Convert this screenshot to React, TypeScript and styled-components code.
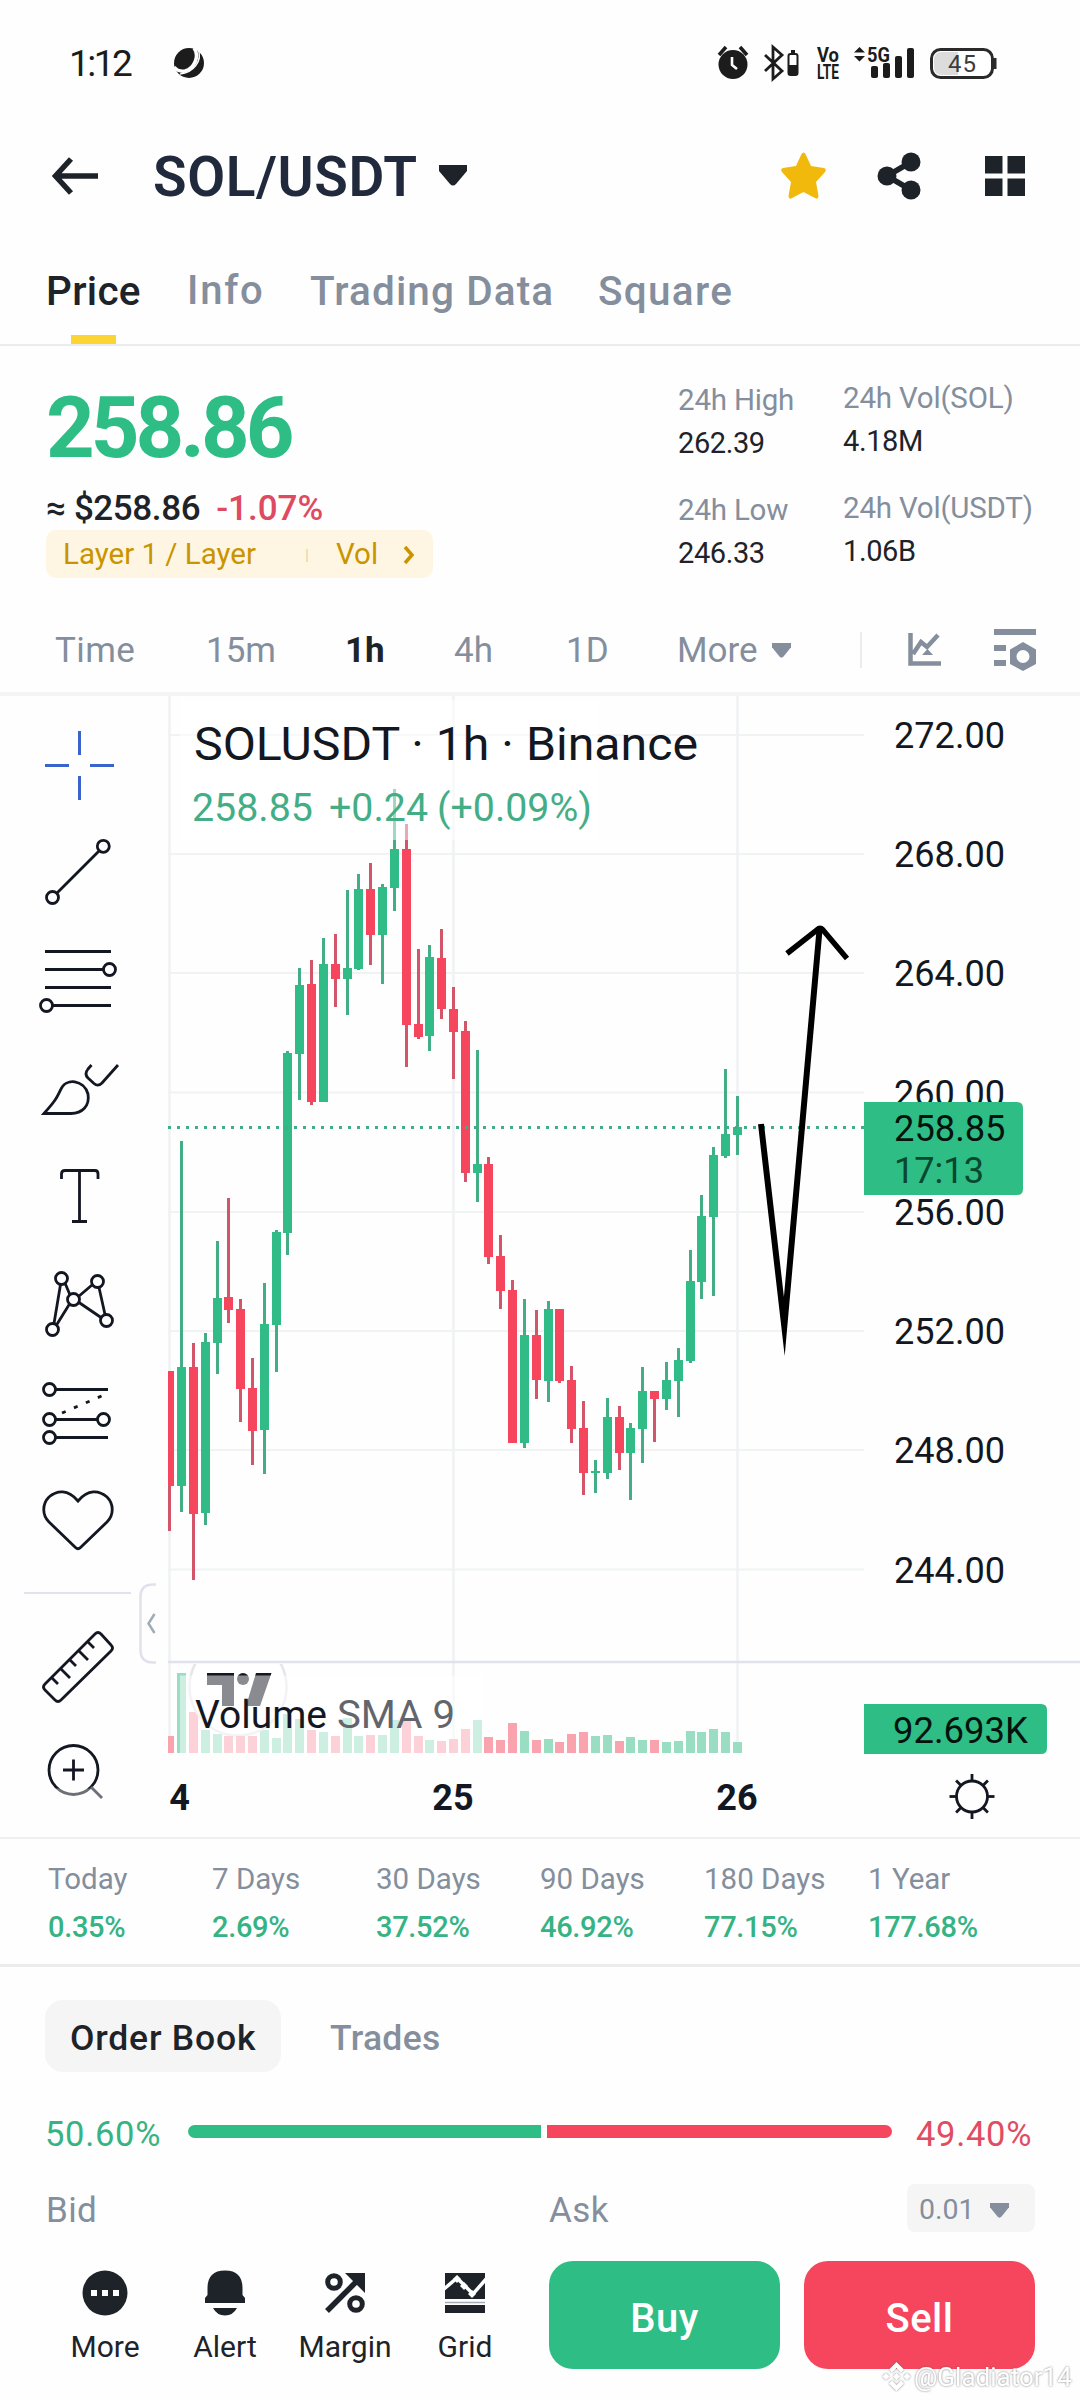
import React from 'react';
import styled, { createGlobalStyle } from 'styled-components';

const ink = '#1e2329';
const gray = '#848e9c';
const green = '#2ebd85';
const red = '#f6465d';

const Global = createGlobalStyle`
  body { margin: 0; background: #fff; }
  * { box-sizing: border-box; }
`;

const Screen = styled.main`
  position: relative;
  width: 1080px;
  height: 2400px;
  overflow: hidden;
  background: #fefefe;
  font-family: Roboto, 'Liberation Sans', sans-serif;
  color: ${ink};
  display: flex;
  flex-direction: column;
`;

interface TextProps {
  $size: number;
  $color?: string;
  $weight?: number;
  $spacing?: number;
  $line?: number;
}

const Text = styled.span<TextProps>`
  display: block;
  white-space: pre;
  font-size: ${p => p.$size}px;
  color: ${p => p.$color ?? ink};
  font-weight: ${p => p.$weight ?? 400};
  letter-spacing: ${p => p.$spacing ?? 0}px;
  line-height: ${p => (p.$line ? `${p.$line}px` : 1)};
`;

/* ---------- status bar ---------- */

const StatusBar = styled.header`
  height: 126px;
  flex: none;
  display: flex;
  align-items: center;
  justify-content: space-between;
  padding: 0 80px 0 69px;
`;

const StatusLeft = styled.div`
  display: flex;
  align-items: center;
  gap: 43px;
`;

/* ---------- header ---------- */

const Header = styled.div`
  height: 99px;
  flex: none;
  display: flex;
  align-items: center;
  padding: 0 55px 0 51px;
`;

const Pair = styled.div`
  display: flex;
  align-items: center;
  gap: 21px;
  margin-left: 54px;
  flex: 1;
`;

const PairName = styled.div`
  padding-top: 4px;
`;

const HeaderActions = styled.div`
  display: flex;
  align-items: center;
`;

/* ---------- tabs ---------- */

const Tabs = styled.nav`
  height: 121px;
  flex: none;
  display: flex;
  padding-left: 46px;
  border-bottom: 2px solid #eaecef;
`;

const Tab = styled.div<{ $width: number; $active?: boolean }>`
  position: relative;
  width: ${p => p.$width}px;
  padding-top: 46px;
  ${p =>
    p.$active &&
    `&::after {
      content: '';
      position: absolute;
      left: 25px;
      bottom: 0;
      width: 45px;
      height: 9px;
      background: #fcd535;
    }`}
`;

/* ---------- ticker ---------- */

const Ticker = styled.section`
  height: 261px;
  flex: none;
  display: flex;
  padding-left: 46px;
`;

const PriceBlock = styled.div`
  width: 632px;
  padding-top: 42px;
`;

const SubPrice = styled.div`
  display: flex;
  gap: 16px;
  margin-top: 21px;
`;

const Tag = styled.div`
  width: 387px;
  height: 48px;
  margin-top: 1px;
  border-radius: 10px;
  background: #fef6e2;
  display: flex;
  align-items: center;
  padding: 2px 0 0 17px;
`;

const TagDivider = styled.i`
  width: 2px;
  height: 13px;
  margin: 0 28px 0 50px;
  background: #f1dfae;
`;

const Stats = styled.div<{ $width: number; $top: number }>`
  width: ${p => p.$width}px;
  padding-top: ${p => p.$top}px;
  display: grid;
  grid-template-rows: 43px 67px 43px 40px;
`;

/* ---------- intervals ---------- */

const Intervals = styled.nav`
  height: 89px;
  flex: none;
  display: flex;
  align-items: center;
  padding-left: 55px;
  border-bottom: 4px solid #f4f4f5;
`;

const Interval = styled.div<{ $width: number }>`
  width: ${p => p.$width}px;
  padding-top: 2px;
  display: flex;
  align-items: center;
  gap: 14px;
`;

const IntervalDivider = styled.i`
  width: 2px;
  height: 36px;
  background: #eaecef;
`;

/* ---------- chart ---------- */

const ChartSection = styled.section`
  height: 1143px;
  flex: none;
  display: flex;
  border-bottom: 2px solid #eeeff1;
`;

const Toolbar = styled.aside`
  position: relative;
  width: 168px;
  padding: 15px 0 0 24px;
  display: flex;
  flex-direction: column;
  align-items: flex-start;
`;

const ToolButton = styled.svg`
  width: 108px;
  height: 108px;
  flex: none;
  display: block;
  fill: none;
  stroke: #131722;
  stroke-width: 2.8;
`;

const ToolDivider = styled.i`
  width: 107px;
  height: 2px;
  margin: 17px 0 17px;
  background: #e0e3eb;
`;

const CollapseHandle = styled.svg`
  position: absolute;
  left: 136px;
  top: 886px;
  width: 20px;
  height: 84px;
  fill: none;
`;

const ChartSvg = styled.svg`
  width: 912px;
  height: 1141px;
  display: block;
  font-family: Roboto, sans-serif;
`;

/* ---------- performance ---------- */

const Performance = styled.section`
  height: 128px;
  flex: none;
  display: grid;
  grid-template-columns: repeat(6, 164px);
  padding: 21px 0 0 48px;
  border-bottom: 3px solid #ececec;
`;

const Period = styled.div`
  display: grid;
  grid-template-rows: 38px 60px;
`;

/* ---------- order book ---------- */

const BookTabs = styled.div`
  display: flex;
  align-items: center;
  gap: 49px;
  margin: 33px 0 0 45px;
  height: 72px;
`;

const ActivePill = styled.div`
  width: 236px;
  height: 72px;
  border-radius: 18px;
  background: #f5f5f5;
  display: flex;
  align-items: center;
  padding: 5px 0 0 25px;
`;

const IdleTab = styled.div`
  padding-top: 5px;
`;

const Ratio = styled.div`
  display: flex;
  align-items: center;
  height: 40px;
  margin: 41px 0 0 45px;
`;

const RatioText = styled.div<{ $width: number }>`
  width: ${p => p.$width}px;
  padding-top: 2px;
`;

const RatioBar = styled.div`
  display: flex;
  gap: 6px;
  width: 704px;
  height: 13px;
  margin: -4px 24px 0 0;
`;

const RatioPart = styled.i<{ $share: number; $color: string; $side: 'left' | 'right' }>`
  flex: ${p => p.$share};
  background: ${p => p.$color};
  border-radius: ${p => (p.$side === 'left' ? '7px 0 0 7px' : '0 7px 7px 0')};
`;

const BookHead = styled.div`
  display: flex;
  align-items: center;
  height: 48px;
  margin: 31px 45px 0 46px;
`;

const BookLabel = styled.div<{ $width: number }>`
  width: ${p => p.$width}px;
  padding-top: 5px;
`;

const Precision = styled.div`
  margin-left: auto;
  width: 128px;
  height: 48px;
  border-radius: 8px;
  background: #f5f5f5;
  display: flex;
  align-items: center;
  justify-content: space-between;
  padding: 5px 26px 0 12px;
`;

/* ---------- action bar ---------- */

const ActionBar = styled.footer`
  display: flex;
  align-items: flex-start;
  gap: 24px;
  margin: 29px 45px 0 45px;
`;

const Shortcuts = styled.div`
  display: flex;
  width: 480px;
`;

const Shortcut = styled.div`
  width: 120px;
  display: flex;
  flex-direction: column;
  align-items: center;
  padding-top: 8px;
`;

const ShortcutIcon = styled.svg`
  flex: none;
  width: 48px;
  height: 48px;
`;

const TradeButton = styled.button<{ $color: string }>`
  width: 231px;
  height: 108px;
  padding: 7px 0 0;
  border: 0;
  border-radius: 24px;
  background: ${p => p.$color};
  display: flex;
  align-items: center;
  justify-content: center;
  font-family: inherit;
`;

const Watermark = styled.div`
  position: absolute;
  left: 882px;
  top: 2361px;
  display: flex;
  align-items: center;
  gap: 3px;
  filter: drop-shadow(0 0 1px rgba(90, 90, 90, 0.75));
`;

/* ---------- icons ---------- */

const Caret = ({ w, h, color = gray }: { w: number; h: number; color?: string }) => (
  <svg width={w} height={h} viewBox="0 0 28 21" preserveAspectRatio="none" fill={color}>
    <path d="M0 0H28V6L17 19Q14 22 11 19L0 6Z" />
  </svg>
);

const StatusIcons = () => (
  <svg width="284" height="40" viewBox="716 43 284 40" fill="#1c1c1c">
    <circle cx="733" cy="64.500" r="14.500" />
    <path d="M719 55L726 47M747 55L740 47" stroke="#1c1c1c" strokeWidth="3.500" />
    <path d="M732 57V65L737 69" stroke="#fff" strokeWidth="2.600" fill="none" />
    <path d="M765 55L782 71L773 79V47L782 55L765 71" stroke="#1c1c1c" strokeWidth="2.800" fill="none" />
    <rect x="788.500" y="54" width="9" height="21" rx="2" stroke="#1c1c1c" strokeWidth="2" fill="none" />
    <rect x="791" y="50" width="4" height="3" />
    <rect x="788" y="65" width="10" height="10" />
    <text x="817" y="61.500" fontSize="20" fontWeight="700" textLength="22" lengthAdjust="spacingAndGlyphs">Vo</text>
    <text x="817" y="78.500" fontSize="20" fontWeight="700" textLength="22" lengthAdjust="spacingAndGlyphs">LTE</text>
    <path d="M854 52.500L859.500 47L865 52.500ZM854 56L859.500 61.500L865 56Z" />
    <text x="867" y="62" fontSize="21" fontWeight="700" textLength="23" lengthAdjust="spacingAndGlyphs">5G</text>
    <rect x="871" y="66" width="7" height="12" rx="2" />
    <rect x="883" y="63" width="7" height="15" rx="2" />
    <rect x="895" y="56" width="7" height="22" rx="2" />
    <rect x="907" y="48" width="7" height="30" rx="2" />
    <rect x="931.500" y="49.500" width="61" height="28" rx="9" fill="#fff" stroke="#2a2a2a" strokeWidth="3" />
    <path d="M942 52H958V75H942Q934 75 934 67V60Q934 52 942 52Z" fill="#dcdcdc" />
    <path d="M995 58V69" stroke="#2a2a2a" strokeWidth="3" />
    <text x="948" y="72" fontSize="24" fill="#3c3c3c" textLength="28">45</text>
  </svg>
);

const Tool = ({ top, children }: { top: number; children: React.ReactNode }) => (
  <ToolButton viewBox={`24 ${top} 108 108`}>{children}</ToolButton>
);

/* ---------- chart data ---------- */

// x, high, body top, body bottom, low, direction, volume
type Candle = [number, number, number, number, number, 0 | 1, number];
const candles: Candle[] = [
  [169.5, 1371, 1371, 1486, 1531, 0, 17], [181.5, 1141, 1367, 1486, 1512, 1, 80],
  [193.5, 1343, 1367, 1514, 1580, 0, 41], [205.5, 1333, 1342, 1513, 1525, 1, 23],
  [217.5, 1241, 1298, 1343, 1374, 1, 19], [228.5, 1198, 1297, 1310, 1323, 0, 17],
  [240.5, 1299, 1309, 1389, 1422, 0, 17], [252.5, 1358, 1388, 1431, 1465, 0, 17],
  [264.5, 1283, 1324, 1430, 1474, 1, 23], [276.5, 1230, 1232, 1325, 1372, 1, 15],
  [287.5, 1051, 1053, 1233, 1255, 1, 39], [299.5, 968, 985, 1054, 1100, 1, 34],
  [311.5, 960, 984, 1102, 1105, 0, 23], [323.5, 938, 964, 1102, 1102, 1, 21],
  [335.5, 934, 964, 979, 1007, 0, 17], [347.5, 890, 968, 979, 1015, 1, 35],
  [358.5, 874, 889, 969, 970, 1, 17], [370.5, 863, 889, 935, 965, 0, 18],
  [382.5, 884, 887, 935, 984, 1, 18], [394.5, 789, 849, 888, 911, 1, 33],
  [406.5, 824, 849, 1025, 1067, 0, 32], [418.5, 949, 1024, 1037, 1039, 0, 17],
  [429.5, 945, 957, 1036, 1051, 1, 13], [441.5, 929, 958, 1009, 1019, 0, 12],
  [453.5, 987, 1009, 1032, 1079, 0, 14], [465.5, 1021, 1031, 1173, 1182, 0, 24],
  [477.5, 1050, 1164, 1173, 1202, 1, 33], [488.5, 1157, 1164, 1257, 1264, 0, 16],
  [500.5, 1235, 1256, 1291, 1309, 0, 13], [512.5, 1280, 1290, 1443, 1443, 0, 30],
  [524.5, 1299, 1335, 1443, 1448, 1, 22], [536.5, 1310, 1335, 1380, 1399, 0, 13],
  [548.5, 1301, 1309, 1381, 1402, 1, 14], [559.5, 1309, 1309, 1381, 1383, 0, 11],
  [571.5, 1366, 1380, 1429, 1443, 0, 19], [583.5, 1401, 1428, 1473, 1495, 0, 21],
  [595.5, 1460, 1471, 1473, 1493, 1, 17], [607.5, 1398, 1417, 1473, 1479, 1, 18],
  [619.5, 1406, 1417, 1453, 1470, 0, 12], [630.5, 1423, 1428, 1453, 1500, 1, 16],
  [642.5, 1367, 1391, 1429, 1463, 1, 13], [654.5, 1391, 1391, 1399, 1442, 0, 13],
  [666.5, 1362, 1380, 1399, 1410, 1, 11], [678.5, 1348, 1360, 1381, 1417, 1, 12],
  [690.5, 1250, 1281, 1361, 1363, 1, 22], [701.5, 1195, 1216, 1282, 1299, 1, 21],
  [713.5, 1147, 1155, 1217, 1296, 1, 24], [725.5, 1069, 1134, 1156, 1158, 1, 21],
  [737.5, 1096, 1127, 1135, 1155, 1, 11],
];

const levels: [string, number][] = [
  ['272.00', 735], ['268.00', 854], ['264.00', 973], ['260.00', 1092.5],
  ['256.00', 1212], ['252.00', 1331], ['248.00', 1450], ['244.00', 1569.5],
];

interface LabelProps {
  x: number;
  y: number;
  size: number;
  width: number;
  fill?: string;
  children: string;
}

const ChartLabel = ({ x, y, size, width, fill = '#131722', children }: LabelProps) => (
  <text x={x} y={y} fontSize={size} fill={fill} textLength={width} lengthAdjust="spacingAndGlyphs">
    {children}
  </text>
);

const Chart = () => (
  <ChartSvg viewBox="168 696 912 1141">
    <g stroke="#f0f3f2" strokeWidth="2">
      {levels.map(([label, y]) => <path key={label} d={`M168 ${y}H864`} />)}
    </g>
    <path d="M169.500 696V1753M453.500 696V1753M737.500 696V1753" stroke="#f0f1f2" strokeWidth="2.500" />
    {candles.map(([x, high, top, bottom, low, up, vol]) => (
      <g key={x}>
        <rect x={x - 4.5} y={1753 - vol} width="9" height={vol} fill={up ? '#99dec3' : '#f9a3af'} />
        <rect x={x - 1.5} y={high} width="3" height={low - high} fill={up ? '#43ae86' : '#d2556a'} />
        <rect x={x - 4.5} y={top} width="9" height={bottom - top} fill={up ? '#31bb86' : red} />
      </g>
    ))}
    <path d="M168 1127.500H864" stroke="#3fae87" strokeWidth="3" strokeDasharray="3 6" />
    <path d="M168 1662H1080" stroke="#e0e3eb" strokeWidth="2.500" />

    <path d="M761 1124L784.300 1326.500L819.500 930" fill="none" stroke="#000" strokeWidth="6" strokeMiterlimit="20" />
    <path d="M787 953.500L817 930Q820 927 823 930L847 958.500" fill="none" stroke="#000" strokeWidth="5.500" />

    <clipPath id="volumePane"><rect x="168" y="1664" width="700" height="90" /></clipPath>
    <g clipPath="url(#volumePane)">
      <circle cx="238" cy="1687" r="48.500" fill="#fff" stroke="#e4e6ea" strokeWidth="2.500" />
      <g fill="#131722">
        <path d="M207 1673H234V1706H222V1685H207Z" />
        <circle cx="243" cy="1679" r="6" />
        <path d="M256 1673H271.500L260 1706H246Z" />
      </g>
      {candles.slice(2, 11).map(([x, , , , , up, vol]) => (
        <rect key={x} x={x - 4.5} y={Math.max(1753 - vol, 1731)} width="9" height={Math.min(vol, 22)} fill={up ? '#99dec3' : '#f9a3af'} />
      ))}
      <rect x="180" y="1675.500" width="304" height="80" fill="#fff" opacity="0.5" />
    </g>

    <rect x="180" y="700" width="418" height="140" fill="#fff" opacity="0.5" />
    <ChartLabel x={194} y={759.5} size={47} width={504}>SOLUSDT · 1h · Binance</ChartLabel>
    <ChartLabel x={192} y={821} size={38.5} width={121} fill="#43ae86">258.85</ChartLabel>
    <ChartLabel x={329} y={821} size={38.5} width={99} fill="#43ae86">+0.24</ChartLabel>
    <ChartLabel x={437} y={821} size={38.5} width={155} fill="#43ae86">(+0.09%)</ChartLabel>

    <ChartLabel x={195} y={1727.5} size={38} width={132}>Volume</ChartLabel>
    <ChartLabel x={337} y={1727.5} size={38} width={118} fill="#63656d">SMA 9</ChartLabel>

    {levels.map(([label, y]) => (
      <ChartLabel key={label} x={894} y={y + 13} size={36.5} width={111}>{label}</ChartLabel>
    ))}
    <path d="M864 1102H1017Q1023 1102 1023 1108V1189Q1023 1195 1017 1195H864Z" fill={green} />
    <ChartLabel x={894} y={1141} size={36.5} width={111.5} fill="#04130d">258.85</ChartLabel>
    <ChartLabel x={894} y={1183} size={36.5} width={90} fill="#09472e">17:13</ChartLabel>
    <path d="M864 1704H1041Q1047 1704 1047 1710V1748Q1047 1754 1041 1754H864Z" fill={green} />
    <ChartLabel x={893} y={1743} size={36.5} width={135} fill="#04130d">92.693K</ChartLabel>

    <g fontSize="36" fontWeight="700" fill="#131722" textAnchor="middle">
      <text x="179.500" y="1810">4</text>
      <text x="453" y="1810">25</text>
      <text x="737" y="1810">26</text>
    </g>
    <g fill="none" stroke="#131722" strokeWidth="2.800">
      <circle cx="972" cy="1796.500" r="15.500" />
      {[0, 45, 90, 135, 180, 225, 270, 315].map(a => (
        <path key={a} d="M972 1781V1774" transform={`rotate(${a} 972 1796.5)`} />
      ))}
    </g>
  </ChartSvg>
);

const Tools = () => (
  <Toolbar>
    <Tool top={711}>
      <path stroke="#3a64cc" strokeWidth="3" d="M79.500 731V755M79.500 776V800M45 765.500H69M90 765.500H114" />
    </Tool>
    <Tool top={819}>
      <circle cx="103.300" cy="846.300" r="6" /><circle cx="52.500" cy="897.500" r="6" /><path d="M57 893L99 851" />
    </Tool>
    <Tool top={927}>
      <path d="M45 951.500H111M45 969.500H103M45 987.500H111M53 1005.500H111" />
      <circle cx="109.500" cy="969.500" r="6" /><circle cx="46.500" cy="1005.500" r="6" />
    </Tool>
    <Tool top={1035}>
      <path d="M44 1113.500C57 1099 57 1097 60.500 1090C66 1077 84 1080 88 1094C90 1106 82 1113.500 71 1113.500Z" />
      <path d="M91.500 1065L88 1069Q84 1074 88 1078L94 1083.500Q98 1087 102 1083L118 1065" />
    </Tool>
    <Tool top={1143}>
      <path d="M61.500 1179V1174Q61.500 1170.500 65 1170.500H95Q98 1170.500 98 1174V1179M79.500 1170.500V1221M72 1221.500H87" />
    </Tool>
    <Tool top={1251}>
      <circle cx="61.500" cy="1278.500" r="6" /><circle cx="97.500" cy="1281.500" r="6" /><circle cx="73.500" cy="1299.500" r="6" />
      <circle cx="52.500" cy="1329.500" r="6" /><circle cx="106.500" cy="1320.500" r="6" />
      <path d="M60.500 1284.500L54 1323.500M65 1283L70 1295M78.500 1296.500L92 1285M99 1287.500L105 1314.500M79 1302.500L101 1317.500M69.500 1304L56.500 1325" />
    </Tool>
    <Tool top={1359}>
      <circle cx="49.500" cy="1389.500" r="6" /><circle cx="49.500" cy="1419.500" r="6" /><circle cx="103.500" cy="1419.500" r="6" />
      <circle cx="49.500" cy="1437.500" r="6" /><path d="M55.500 1389.500H108M55.500 1419.500H97.500M55.500 1437.500H108" />
      <path d="M62 1413L104 1395" strokeDasharray="4 9" />
    </Tool>
    <Tool top={1467}>
      <path d="M78 1501C68 1489 57 1490 49 1497C42 1504 42 1515 49 1522L75.500 1547.500Q78 1550 80.500 1547.500L107 1522C114 1515 114 1504 107 1497C99 1490 88 1489 78 1501Z" />
    </Tool>
    <ToolDivider />
    <Tool top={1611}>
      <path d="M45 1684L95 1634Q98 1631 101 1634L111 1645Q114 1648 111 1651L61 1700Q58 1703 55 1700L45 1690Q42 1687 45 1684Z" />
      <path d="M52 1678L58 1684M61 1669L70 1678M70 1660L76 1666M79 1651L88 1660M88 1642L94 1648" />
    </Tool>
    <Tool top={1719}>
      <defs>
        <linearGradient id="fade" x1="0" y1="1745" x2="0" y2="1800" gradientUnits="userSpaceOnUse">
          <stop offset="0.780" stopColor="#131722" /><stop offset="0.800" stopColor="#6d6f76" />
        </linearGradient>
      </defs>
      <circle cx="73.500" cy="1770" r="24.500" stroke="url(#fade)" />
      <path d="M63 1770H84M73.500 1759.500V1780.500" />
      <path d="M91 1787L102 1798" stroke="#6d6f76" />
    </Tool>
    <CollapseHandle viewBox="136 1582 20 84">
      <path d="M156 1584.500H153Q140.500 1584.500 140.500 1597V1650Q140.500 1662.500 153 1662.500H156" stroke="#dfe2ea" strokeWidth="2.500" />
      <path d="M154.500 1614L148.500 1623.500L154.500 1633" stroke="#9fadb7" strokeWidth="2.500" />
    </CollapseHandle>
  </Toolbar>
);

const periods = [
  ['Today', '0.35%'], ['7 Days', '2.69%'], ['30 Days', '37.52%'],
  ['90 Days', '46.92%'], ['180 Days', '77.15%'], ['1 Year', '177.68%'],
];

const Stat = ({ label, value }: { label: string; value: string }) => (
  <>
    <Text $size={29.5} $color={gray} $line={30} $spacing={-0.2}>{label}</Text>
    <Text $size={29} $line={30} $spacing={-0.4}>{value}</Text>
  </>
);

export default function App() {
  return (
    <Screen>
      <Global />
      <StatusBar>
        <StatusLeft>
          <Text $size={37} $spacing={-2.5} $color="#1c1c1c">1:12</Text>
          <svg width="32" height="32" viewBox="0 0 32 32">
            <circle cx="16" cy="16" r="15" fill="#1c1c1c" />
            <path d="M21 1C27 9 21 22 12 24Q5 25 1 20" fill="none" stroke="#fff" strokeWidth="3.500" />
            <path d="M25 2C30 14 20 26 7 27" fill="none" stroke="#fff" strokeWidth="1.500" />
          </svg>
        </StatusLeft>
        <StatusIcons />
      </StatusBar>

      <Header>
        <svg width="48" height="40" viewBox="0 0 48 40" fill="none" stroke={ink} strokeWidth="5.500">
          <path d="M20 3L4.500 20L20 37M4 20H47" />
        </svg>
        <Pair>
          <PairName><Text $size={55} $weight={600} $spacing={0.6} $color="#202a3c">SOL/USDT</Text></PairName>
          <Caret w={28} h={21} color={ink} />
        </Pair>
        <HeaderActions>
          <svg width="47" height="48" viewBox="0 0 47 48" fill="#f0b90b">
            <path d="M21.500 2Q23.500 -1 25.500 2L31 14L44 16Q47 17 45 20L36 30L38.500 44Q38 48 35 46L23.500 40L12 46Q9 48 8.500 44L11 30L2 20Q0 17 3 16L16 14Z" />
          </svg>
          <svg width="45" height="48" viewBox="0 0 45 48" fill={ink} style={{ marginLeft: 50 }}>
            <circle cx="10" cy="24" r="9.500" /><circle cx="34" cy="10" r="9.500" /><circle cx="34" cy="38" r="9.500" />
            <path d="M34 10L10 24L34 38" stroke={ink} strokeWidth="5.500" fill="none" />
          </svg>
          <svg width="40" height="40" viewBox="0 0 40 40" fill={ink} style={{ marginLeft: 63 }}>
            <path d="M0 0H17.500V17.500H0ZM22.500 0H40V17.500H22.500ZM0 22.500H17.500V40H0ZM22.500 22.500H40V40H22.500Z" />
          </svg>
        </HeaderActions>
      </Header>

      <Tabs>
        <Tab $width={141} $active><Text $size={40.5} $weight={500} $line={40} $spacing={0.3}>Price</Text></Tab>
        <Tab $width={123}><Text $size={40} $weight={500} $color={gray} $line={40} $spacing={1.8}>Info</Text></Tab>
        <Tab $width={288}><Text $size={40.5} $weight={500} $color={gray} $line={40} $spacing={1.1}>Trading Data</Text></Tab>
        <Tab $width={160}><Text $size={40.5} $weight={500} $color={gray} $line={40} $spacing={1.3}>Square</Text></Tab>
      </Tabs>

      <Ticker>
        <PriceBlock>
          <Text $size={85} $weight={700} $color={green} $line={80} $spacing={-4}>258.86</Text>
          <SubPrice>
            <Text $size={35} $weight={500} $line={40} $spacing={-0.4}>≈ $258.86</Text>
            <Text $size={35} $weight={500} $line={40} $color="#df4a60">-1.07%</Text>
          </SubPrice>
          <Tag>
            <Text $size={29.5} $color="#c99400">Layer 1 / Layer</Text>
            <TagDivider />
            <Text $size={29.5} $color="#c99400">Vol</Text>
            <svg width="12" height="20" viewBox="0 0 12 20" fill="none" stroke="#c99400" strokeWidth="3.500" style={{ marginLeft: 25 }}>
              <path d="M2 2L9 10L2 18" />
            </svg>
          </Tag>
        </PriceBlock>
        <Stats $width={165} $top={39}>
          <Stat label="24h High" value="262.39" />
          <Stat label="24h Low" value="246.33" />
        </Stats>
        <Stats $width={220} $top={37}>
          <Stat label="24h Vol(SOL)" value="4.18M" />
          <Stat label="24h Vol(USDT)" value="1.06B" />
        </Stats>
      </Ticker>

      <Intervals>
        <Interval $width={151}><Text $size={35} $color={gray} $spacing={0.4}>Time</Text></Interval>
        <Interval $width={139}><Text $size={35} $color={gray}>15m</Text></Interval>
        <Interval $width={109}><Text $size={35} $weight={700}>1h</Text></Interval>
        <Interval $width={112}><Text $size={35} $color={gray}>4h</Text></Interval>
        <Interval $width={111}><Text $size={35} $color={gray}>1D</Text></Interval>
        <Interval $width={183}><Text $size={35} $color={gray}>More</Text><Caret w={19} h={15} /></Interval>
        <IntervalDivider />
        <svg width="33" height="33" viewBox="0 0 33 33" fill="none" stroke={gray} strokeWidth="4.500" style={{ marginLeft: 46 }}>
          <path d="M2.500 0V30.500H33M5 21L13 9L19 14L30 2" />
          <path d="M14 22L19.500 16L25 22Z" fill={gray} stroke="none" />
        </svg>
        <svg width="42" height="43" viewBox="0 0 42 43" fill={gray} style={{ marginLeft: 53 }}>
          <path d="M0 1H42V7H0ZM0 17H12V23H0ZM0 32H12V38H0Z" />
          <path fillRule="evenodd" d="M29 14L42 21.500V36L29 43L16 36V21.500ZM29 22A6.500 6.500 0 1 0 29 35A6.500 6.500 0 1 0 29 22Z" />
        </svg>
      </Intervals>

      <ChartSection>
        <Tools />
        <Chart />
      </ChartSection>

      <Performance>
        {periods.map(([label, value]) => (
          <Period key={label}>
            <Text $size={29.5} $color={gray} $line={38}>{label}</Text>
            <Text $size={29} $color="#36b384" $weight={500} $line={59} $spacing={-0.3}>{value}</Text>
          </Period>
        ))}
      </Performance>

      <BookTabs>
        <ActivePill><Text $size={35.5} $weight={500} $spacing={0.8}>Order Book</Text></ActivePill>
        <IdleTab><Text $size={35.5} $weight={500} $color={gray} $spacing={0.3}>Trades</Text></IdleTab>
      </BookTabs>

      <Ratio>
        <RatioText $width={143}><Text $size={34.5} $color="#36b384" $spacing={0.7}>50.60%</Text></RatioText>
        <RatioBar>
          <RatioPart $share={50.6} $color={green} $side="left" />
          <RatioPart $share={49.4} $color={red} $side="right" />
        </RatioBar>
        <RatioText $width={130}><Text $size={34.5} $color="#e04d62" $spacing={0.7}>49.40%</Text></RatioText>
      </Ratio>

      <BookHead>
        <BookLabel $width={503}><Text $size={35} $color={gray} $spacing={0.4}>Bid</Text></BookLabel>
        <BookLabel $width={120}><Text $size={35} $color={gray} $spacing={0.4}>Ask</Text></BookLabel>
        <Precision><Text $size={28.5} $color={gray}>0.01</Text><Caret w={19} h={15} /></Precision>
      </BookHead>

      <ActionBar>
        <Shortcuts>
          <Shortcut>
            <ShortcutIcon viewBox="0 0 48 48" fill={ink}>
              <circle cx="24" cy="24" r="22.500" />
              <path d="M10 21H16V27H10ZM21 21H27V27H21ZM32 21H38V27H32Z" fill="#fff" />
            </ShortcutIcon>
            <Text $size={30} $line={60}>More</Text>
          </Shortcut>
          <Shortcut>
            <ShortcutIcon viewBox="0 0 48 48" fill={ink}>
              <path d="M4 34V29L6.500 26V19Q6.500 1.500 24 1.500T41.500 19V26L44 29V34ZM12 39H36Q32 46.500 24 46.500T12 39Z" />
            </ShortcutIcon>
            <Text $size={30} $line={60}>Alert</Text>
          </Shortcut>
          <Shortcut>
            <ShortcutIcon viewBox="0 0 48 48" fill="none" stroke={ink} strokeWidth="5">
              <circle cx="13" cy="13" r="6.300" /><circle cx="35" cy="35" r="6.300" />
              <path d="M6 42L38 10" strokeWidth="5.500" />
              <path d="M24 4H44V24Z" fill={ink} stroke="none" />
            </ShortcutIcon>
            <Text $size={30} $line={60}>Margin</Text>
          </Shortcut>
          <Shortcut>
            <ShortcutIcon viewBox="0 0 48 48">
              <path d="M4 4H44V30H4ZM4 36H44V44H4Z" fill={ink} />
              <path d="M3 20L16 9L32 25L46 9" fill="none" stroke="#fff" strokeWidth="3.500" />
              <path d="M16 6L20 10L16 14L12 10ZM31 21L35 25L31 29L27 25ZM23 13L27 17L23 21L19 17Z" fill="#fff" />
              <path d="M4 33.500H44" stroke="#a9adb3" strokeWidth="1.500" />
            </ShortcutIcon>
            <Text $size={30} $line={60}>Grid</Text>
          </Shortcut>
        </Shortcuts>
        <TradeButton $color={green}><Text $size={40} $weight={500} $color="#fff" $spacing={0.5}>Buy</Text></TradeButton>
        <TradeButton $color={red}><Text $size={40} $weight={500} $color="#fff" $spacing={0.5}>Sell</Text></TradeButton>
      </ActionBar>

      <Watermark>
        <svg width="29" height="31" viewBox="0 0 29 31" fill="#fff">
          <path d="M14.500 1L22 8.500L19 11.500L14.500 7L10 11.500L7 8.500ZM4 12L7.500 15.500L4 19L0.500 15.500ZM25 12L28.500 15.500L25 19L21.500 15.500ZM14.500 12L18 15.500L14.500 19L11 15.500ZM10 19.500L14.500 24L19 19.500L22 22.500L14.500 30L7 22.500Z" />
        </svg>
        <Text $size={26} $color="#fff">@Gladiator14</Text>
      </Watermark>
    </Screen>
  );
}
